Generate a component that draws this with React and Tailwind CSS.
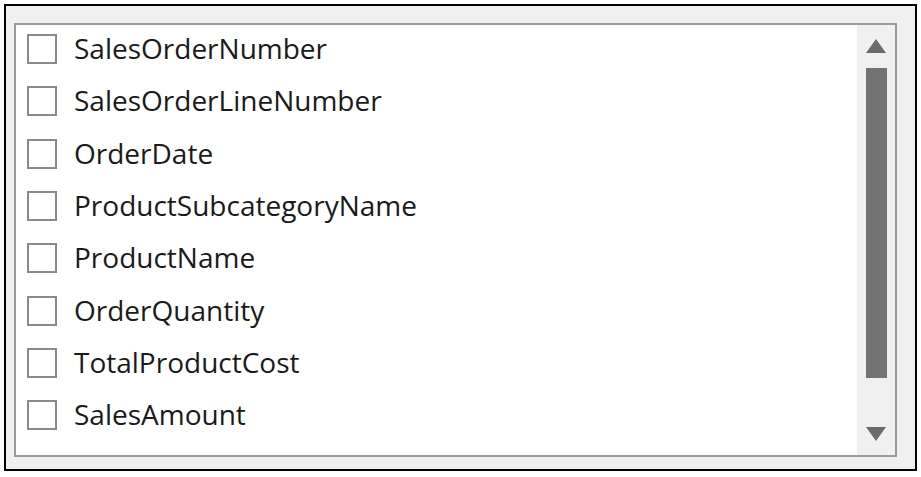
const fields = [
  "SalesOrderNumber",
  "SalesOrderLineNumber",
  "OrderDate",
  "ProductSubcategoryName",
  "ProductName",
  "OrderQuantity",
  "TotalProductCost",
  "SalesAmount",
];

export default function App() {
  return (
    <div className="h-[477px] w-[921px] bg-white p-1" style={{ fontFamily: '"Open Sans", "Noto Sans", sans-serif' }}>
      <div className="flex h-[467px] w-[913px] flex-col border-2 border-black bg-[#f0f0f0] pb-[12px] pl-[8px] pr-[18px] pt-[17px]">
        <div className="flex min-h-0 flex-1 border-2 border-[#9a9a9a] bg-white">
          <div className="-mt-[3px] flex-1 pl-[11px]">
            {fields.map((f) => (
              <div key={f} className="flex h-[52.3px] items-center gap-[17px]">
                <span className="mt-[2px] h-[30px] w-[30px] shrink-0 border-2 border-[#8a8a8a] bg-white" />
                <span className="text-[28px] leading-none text-[#1a1a1a]">{f}</span>
              </div>
            ))}
          </div>
          <div className="flex w-[38px] flex-col items-center bg-[#f0f0f0] py-[13px]">
            <svg width="22" height="16" viewBox="0 0 22 16">
              <polygon points="11,1 21,15 1,15" fill="#6b6b6b" />
            </svg>
            <div className="mt-[14px] h-[310px] w-[21px] bg-[#737373]" />
            <div className="flex-1" />
            <svg width="22" height="16" viewBox="0 0 22 16">
              <polygon points="1,1 21,1 11,15" fill="#6b6b6b" />
            </svg>
          </div>
        </div>
      </div>
    </div>
  );
}
